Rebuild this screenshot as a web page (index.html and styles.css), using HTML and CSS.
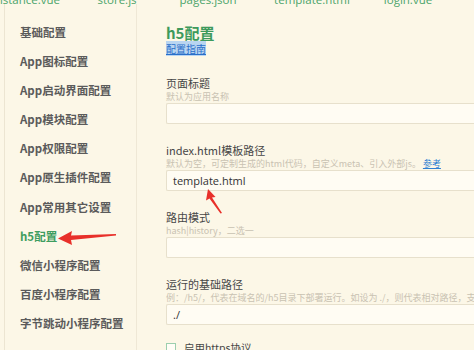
FILE: index.html
```html
<!DOCTYPE html>
<html lang="zh-CN">
<head>
<meta charset="utf-8">
<title>h5配置</title>
<link rel="stylesheet" href="styles.css">
</head>
<body>
<div class="app">
  <div class="tabs">
    <span class="tab t1">instance.vue</span>
    <span class="tab t2">store.js</span>
    <span class="tab t3">pages.json</span>
    <span class="tab t4">template.html</span>
    <span class="tab t5">login.vue</span>
  </div>
  <div class="body">
    <nav class="sidebar">
      <div class="nav-item">基础配置</div>
      <div class="nav-item">App图标配置</div>
      <div class="nav-item">App启动界面配置</div>
      <div class="nav-item">App模块配置</div>
      <div class="nav-item">App权限配置</div>
      <div class="nav-item">App原生插件配置</div>
      <div class="nav-item">App常用其它设置</div>
      <div class="nav-item active">h5配置</div>
      <div class="nav-item">微信小程序配置</div>
      <div class="nav-item">百度小程序配置</div>
      <div class="nav-item">字节跳动小程序配置</div>
    </nav>
    <main class="content">
      <h1 class="title">h5配置</h1>
      <div class="guide"><span class="sel">配置指南</span></div>
      <div class="field">
        <div class="label">页面标题</div>
        <div class="hint">默认为应用名称</div>
        <div class="input"></div>
      </div>
      <div class="field">
        <div class="label">index.html模板路径</div>
        <div class="hint">默认为空，可定制生成的html代码，自定义meta、引入外部js。<span class="ref">参考</span></div>
        <div class="input">template.html</div>
      </div>
      <div class="field">
        <div class="label">路由模式</div>
        <div class="hint">hash|history，二选一</div>
        <div class="input"></div>
      </div>
      <div class="field">
        <div class="label">运行的基础路径</div>
        <div class="hint">例：/h5/，代表在域名的/h5目录下部署运行。如设为 ./，则代表相对路径，支持虚拟目录</div>
        <div class="input">./</div>
      </div>
      <div class="check"><span class="box"></span><span>启用https协议</span></div>
    </main>
  </div>
  <svg class="arrows" width="474" height="350" viewBox="0 0 474 350">
    <polygon fill="#e8302a" points="58,238.5 72,231 71,235.5 116,234 116,235.5 71,240 72,245"/>
    <polygon fill="#e8302a" points="208,189 215.5,197 212,197.5 222,213 220.5,213.5 209.5,198.5 206,200.5"/>
  </svg>
</div>
</body>
</html>
```

FILE: styles.css
```css
* { box-sizing: border-box; }
html, body {
  margin: 0;
  padding: 0;
  width: 474px;
  height: 350px;
  overflow: hidden;
  background: #fcf7e7;
}
body {
  font-family: "Noto Sans CJK SC", "Open Sans", sans-serif;
  color: #4a4a4a;
}
.app {
  position: relative;
  width: 474px;
  height: 350px;
  overflow: hidden;
}
.tabs {
  display: flex;
  height: 10px;
  margin-left: -24px;
  margin-top: -7px;
  font-family: "Open Sans", sans-serif;
  font-size: 11.5px;
  line-height: 14px;
  color: #4aa46a;
  white-space: nowrap;
}
.tab { flex: none; text-align: center; }
.t1 { width: 96px; text-align: right; padding-right: 12px; }
.t2 { width: 86px; padding-left: 4px; }
.t3 { width: 100px; }
.t4 { width: 100px; padding-left: 8px; }
.t5 { width: 94px; padding-left: 6px; }
.body {
  display: flex;
  height: 347px;
  margin-left: 4px;
  margin-top: 1px;
  border-left: 1px solid #ece5d2;
}
.sidebar {
  width: 132px;
  flex: none;
  padding-top: 14px;
  padding-left: 15px;
  border-right: 1px solid #efe8d6;
}
.nav-item {
  height: 29.1px;
  line-height: 29.1px;
  font-size: 11.5px;
  font-weight: 700;
  color: #5b5b5b;
  white-space: nowrap;
}
.nav-item.active { color: #3e9d5f; }
.content {
  flex: 1;
  padding-left: 29px;
  padding-top: 20px;
  overflow: hidden;
}
.title {
  margin: 0;
  font-size: 15px;
  line-height: 18px;
  font-weight: 700;
  color: #3d9a5c;
}
.guide {
  font-size: 10px;
  line-height: 14px;
  margin-bottom: 20px;
}
.sel {
  color: #2a6fc9;
  background: #b9d5f1;
  text-decoration: underline;
}
.field { margin-bottom: 19px; }
.label {
  font-size: 11px;
  line-height: 14px;
  color: #464646;
  white-space: nowrap;
}
.hint {
  font-size: 9px;
  line-height: 13px;
  color: #c9c2b2;
  white-space: nowrap;
}
.ref {
  color: #2f7fd2;
  text-decoration: underline;
  margin-left: 2px;
}
.input {
  width: 340px;
  height: 21px;
  background: #fffcf3;
  border: 1px solid #e7e0cc;
  border-right: none;
  border-radius: 2px 0 0 2px;
  padding-left: 6px;
  font-family: "Open Sans", sans-serif;
  font-size: 11px;
  line-height: 19px;
  color: #333;
}
.check {
  display: flex;
  align-items: center;
  gap: 8px;
  margin-top: -4px;
  font-size: 10.5px;
  color: #464646;
}
.box {
  width: 10px;
  height: 10px;
  border: 1px solid #9ccfae;
  background: #fffdf6;
}
.arrows {
  position: absolute;
  left: 0;
  top: 0;
  pointer-events: none;
}
```
